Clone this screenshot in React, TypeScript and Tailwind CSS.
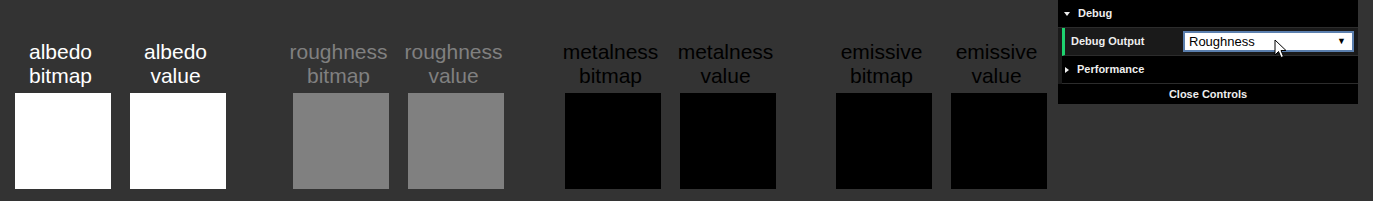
import React from "react";

type Item = { top: string; bottom: string; color: string };

const pairs: { items: Item[]; ml: string }[] = [
  {
    ml: "ml-[15px]",
    items: [
      { top: "albedo", bottom: "bitmap", color: "white" },
      { top: "albedo", bottom: "value", color: "white" },
    ],
  },
  {
    ml: "ml-[67px]",
    items: [
      { top: "roughness", bottom: "bitmap", color: "gray" },
      { top: "roughness", bottom: "value", color: "gray" },
    ],
  },
  {
    ml: "ml-[61px]",
    items: [
      { top: "metalness", bottom: "bitmap", color: "black" },
      { top: "metalness", bottom: "value", color: "black" },
    ],
  },
  {
    ml: "ml-[60px]",
    items: [
      { top: "emissive", bottom: "bitmap", color: "black" },
      { top: "emissive", bottom: "value", color: "black" },
    ],
  },
];

function Swatch({ item }: { item: Item }) {
  const text =
    item.color === "white"
      ? "text-white"
      : item.color === "gray"
      ? "text-[#808080]"
      : "text-black";
  const bg =
    item.color === "white"
      ? "bg-white"
      : item.color === "gray"
      ? "bg-[#808080]"
      : "bg-black";
  return (
    <div className="w-[96px] flex flex-col items-center">
      <div
        className={`pr-[5px] whitespace-nowrap text-center text-[21px] leading-[24px] ${text}`}
      >
        <div>{item.top}</div>
        <div>{item.bottom}</div>
      </div>
      <div className={`mt-[5px] w-[96px] h-[96px] ${bg}`} />
    </div>
  );
}

function Cursor() {
  return (
    <svg
      className="absolute left-[209px] top-[11px]"
      width="14"
      height="20"
      viewBox="0 0 14 20"
    >
      <path
        d="M1 1 L1 16 L4.5 12.5 L7 18.5 L9.5 17.5 L7 11.5 L12 11.5 Z"
        fill="white"
        stroke="black"
        strokeWidth="1"
        strokeLinejoin="miter"
      />
    </svg>
  );
}

export default function App() {
  return (
    <div
      className="relative w-[1373px] h-[201px] bg-[#333333] overflow-hidden"
      style={{ fontFamily: '"Liberation Sans", Arial, sans-serif' }}
    >
      <div className="flex pt-[40px]">
        {pairs.map((p, i) => (
          <div key={i} className={`flex gap-[19px] ${p.ml}`}>
            {p.items.map((it, j) => (
              <Swatch key={j} item={it} />
            ))}
          </div>
        ))}
      </div>

      <div className="absolute top-0 right-[15px] w-[300px] text-[11px] font-bold text-[#eeeeee]">
        <div className="bg-[#1a1a1a]">
          <div className="h-[28px] bg-black border-b border-[#2c2c2c] flex items-center pl-[6px]">
            <span className="w-0 h-0 border-l-[3px] border-r-[3px] border-t-[4px] border-l-transparent border-r-transparent border-t-[#eeeeee] mr-[8px]" />
            <span>Debug</span>
          </div>
          <div className="pl-[4px]">
            <div className="relative h-[28px] bg-[#1a1a1a] border-b border-[#2c2c2c] border-l-[3px] border-l-[#1ed36f] flex items-center pl-[6px] pr-[4px]">
              <span className="flex-1">Debug Output</span>
              <div className="w-[171px] h-[21px] bg-white border-[2px] border-[#5b7fae] flex items-center pl-[4px] pr-[6px] text-[13px] font-normal text-black">
                <span className="flex-1">Roughness</span>
                <span className="text-[9px]">▼</span>
              </div>
              <Cursor />
            </div>
            <div className="h-[28px] bg-black border-b border-[#2c2c2c] flex items-center pl-[3px]">
              <span className="w-0 h-0 border-t-[3px] border-b-[3px] border-l-[4px] border-t-transparent border-b-transparent border-l-[#eeeeee] mr-[8px]" />
              <span>Performance</span>
            </div>
          </div>
        </div>
        <div className="h-[20px] bg-black flex items-center justify-center">
          Close Controls
        </div>
      </div>
    </div>
  );
}
